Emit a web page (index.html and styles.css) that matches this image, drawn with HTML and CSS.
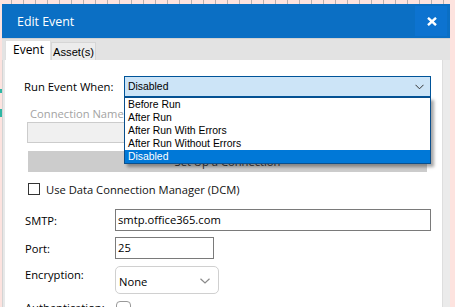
FILE: index.html
```html
<!DOCTYPE html>
<html>
<head>
<meta charset="utf-8">
<link rel="stylesheet" href="styles.css">
</head>
<body>
<div class="ruler"></div>
<div class="dialog">
  <div class="titlebar">
    <span class="title">Edit Event</span>
    <div class="close">
      <svg width="10" height="9" viewBox="0 0 10 9"><path d="M1 0.8 L9 8.2 M9 0.8 L1 8.2" stroke="#fff" stroke-width="2.4" fill="none"/></svg>
    </div>
  </div>
  <div class="tabstrip">
    <div class="tab active">Event</div>
    <div class="tab">Asset(s)</div>
  </div>
  <div class="main">
    <div class="panel">
      <div class="run-row">
        <span class="run-label">Run Event When:</span>
        <div class="combo">
          <span>Disabled</span>
          <svg class="chev" width="9" height="6" viewBox="0 0 9 6"><path d="M0.5 0.8 L4.5 4.8 L8.5 0.8" stroke="#333" stroke-width="1" fill="none"/></svg>
          <ul class="list">
            <li>Before Run</li>
            <li>After Run</li>
            <li>After Run With Errors</li>
            <li>After Run Without Errors</li>
            <li class="sel">Disabled</li>
          </ul>
        </div>
      </div>
      <div class="conn-label">Connection Name</div>
      <div class="conn-input"></div>
      <div class="btn">Set Up a Connection</div>
      <div class="check-row">
        <span class="box"></span>
        <span class="check-label">Use Data Connection Manager (DCM)</span>
      </div>
      <div class="field smtp">
        <span class="flabel">SMTP:</span>
        <div class="input w-smtp">smtp.office365.com</div>
      </div>
      <div class="field port">
        <span class="flabel">Port:</span>
        <div class="input w-port">25</div>
      </div>
      <div class="field enc">
        <span class="flabel">Encryption:</span>
        <div class="select">
          <span>None</span>
          <svg width="10" height="6" viewBox="0 0 10 6"><path d="M0.5 0.8 L5 5 L9.5 0.8" stroke="#8a8a8a" stroke-width="1.2" fill="none"/></svg>
        </div>
      </div>
      <div class="field auth">
        <span class="flabel">Authentication:</span>
        <span class="rbox"></span>
      </div>
    </div>
    <div class="side"></div>
  </div>
</div>
</body>
</html>
```
FILE: styles.css
```css
html, body {
  margin: 0;
  padding: 0;
  width: 455px;
  height: 307px;
  overflow: hidden;
}
body {
  background: #fde3df linear-gradient(to bottom, transparent 89px, #2fb7a4 89px, #2fb7a4 93px, transparent 93px, transparent 109px, #2fb7a4 109px, #2fb7a4 117px, transparent 117px) no-repeat 0 0 / 2px 307px;
  font-family: "Open Sans", "Noto Sans", sans-serif;
  font-size: 11px;
  color: #000;
}
.ruler {
  height: 4px;
  background: repeating-linear-gradient(to right, transparent 0, transparent 11px, #b9b0ae 11px, #b9b0ae 12px);
}
.dialog {
  margin-left: 2px;
  width: 448px;
  height: 303px;
  background: #e8e8e8;
}
.titlebar {
  height: 34px;
  background: #0b6fc4;
  display: flex;
  justify-content: space-between;
  align-items: flex-start;
  color: #fff;
}
.title {
  font-size: 12.4px;
  margin-left: 15px;
  line-height: 35px;
}
.close {
  width: 32px;
  height: 30px;
  margin-top: 2px;
  margin-right: 3px;
  background: #0d73d0;
  display: flex;
  align-items: center;
  justify-content: center;
}
.close svg { margin-top: 1px; margin-left: 1px; }
.tabstrip {
  height: 22px;
  box-sizing: border-box;
  border-top: 1px solid #d2d2d2;
  background: #e3e3e3;
  display: flex;
  align-items: flex-end;
  padding-left: 3px;
}
.tab {
  width: 45px;
  height: 18px;
  box-sizing: border-box;
  border: 1px solid #d6d6d6;
  border-bottom: none;
  background: #ececec;
  font-family: "Liberation Sans", Arial, sans-serif;
  font-size: 11.2px;
  line-height: 18px;
  text-align: center;
}
.tab.active {
  height: 20px;
  width: 46px;
  background: #fff;
  border-color: #e0e0e0;
  font-family: "Open Sans", sans-serif;
  font-size: 12px;
  line-height: 18px;
  padding-left: 1px;
}
.main {
  display: flex;
  height: 247px;
  border-left: 1px solid #d4d4d4;
}
.panel {
  position: relative;
  margin-left: 2px;
  width: 437px;
  background: #fff;
}
.side {
  width: 8px;
  background: #ebebeb;
  border-left: 1px solid #dedede;
  box-sizing: border-box;
}
.run-row {
  display: flex;
  align-items: center;
  margin-top: 16px;
  height: 21px;
  padding-left: 19px;
}
.run-label {
  width: 100px;
  font-size: 11.3px;
}
.combo {
  position: relative;
  width: 307px;
  height: 21px;
  box-sizing: border-box;
  background: #cce4f7;
  border: 1px solid #005499;
  display: flex;
  align-items: center;
  justify-content: space-between;
  padding: 0 6px 0 3px;
  font-family: "Liberation Sans", Arial, sans-serif;
  font-size: 10.4px;
}
.chev { margin-top: 1px; }
.list {
  position: absolute;
  z-index: 5;
  left: -1px;
  top: 20px;
  width: 307px;
  margin: 0;
  padding: 0;
  list-style: none;
  background: #fff;
  border: 1px solid #0a4f8c;
  box-sizing: border-box;
  box-shadow: 3px 3px 3px rgba(0, 0, 0, 0.35);
}
.list li {
  height: 13px;
  line-height: 13px;
  padding-left: 3px;
  white-space: nowrap;
}
.list li.sel {
  background: #0078d7;
  color: #fff;
  height: 13px;
}
.conn-label {
  margin-top: 8px;
  padding-left: 25px;
  height: 17px;
  line-height: 17px;
  color: #a3a3a3;
  font-size: 11.2px;
  white-space: nowrap;
}
.conn-input {
  margin-left: 22px;
  width: 400px;
  height: 21px;
  box-sizing: border-box;
  border: 1px solid #cccccc;
  background: #f0f0f0;
}
.btn {
  margin-top: 8px;
  margin-left: 23px;
  width: 399px;
  height: 21px;
  background: #cccccc;
  color: #333;
  text-align: center;
  line-height: 21px;
  font-size: 11.2px;
}
.check-row {
  margin-top: 11px;
  margin-left: 23px;
  display: flex;
  align-items: center;
  height: 12px;
}
.box {
  width: 12px;
  height: 12px;
  box-sizing: border-box;
  border: 1px solid #333;
  background: #fff;
}
.check-label {
  margin-left: 6px;
  font-size: 11.2px;
  white-space: nowrap;
  color: #111;
}
.field {
  display: flex;
  align-items: center;
  padding-left: 20px;
}
.flabel {
  width: 90px;
  font-size: 11.2px;
  white-space: nowrap;
}
.input {
  height: 22px;
  box-sizing: border-box;
  border: 1px solid #7a7a7a;
  padding-left: 2px;
  line-height: 20px;
  font-size: 11.2px;
}
.smtp { margin-top: 14px; }
.w-smtp { width: 316px; }
.port { margin-top: 6px; }
.w-port { width: 99px; }
.enc {
  margin-top: 7px;
  align-items: flex-start;
}
.enc .flabel { margin-top: 1px; }
.select {
  width: 104px;
  height: 28px;
  box-sizing: border-box;
  border: 1px solid #d0d0d0;
  border-radius: 5px;
  display: flex;
  align-items: center;
  justify-content: space-between;
  padding: 2px 8px 0 3px;
  font-size: 11.2px;
}
.auth {
  margin-top: 7px;
  align-items: flex-start;
}
.auth .flabel { margin-top: -1px; }
.rbox {
  margin-left: 1px;
  width: 15px;
  height: 15px;
  box-sizing: border-box;
  border: 1px solid #999;
  border-radius: 4px;
}
```
